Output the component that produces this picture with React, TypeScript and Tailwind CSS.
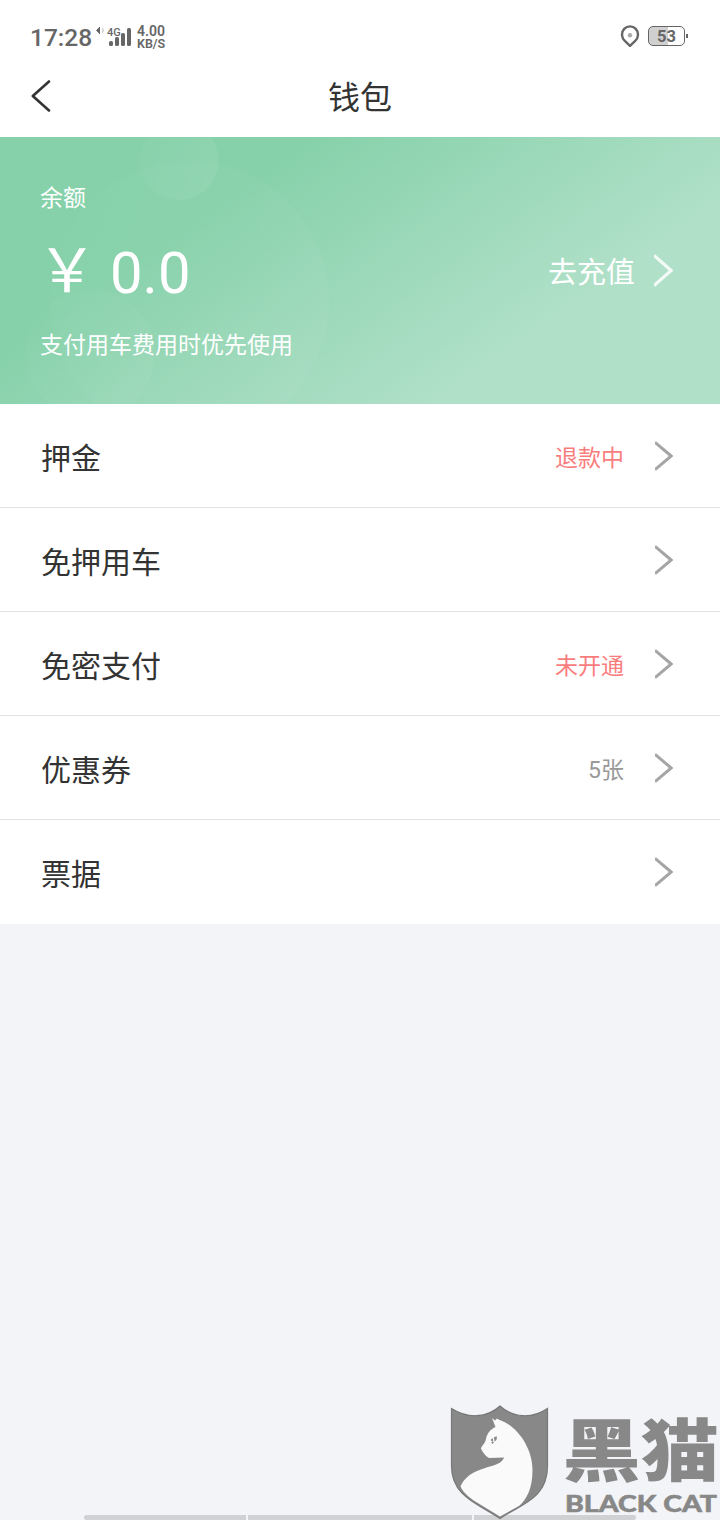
import { ReactNode } from 'react';

interface WalletItem {
  title: string;
  value?: string;
  valueClass?: string;
}

const items: WalletItem[] = [
  { title: '押金', value: '退款中', valueClass: 'text-[#fa7d7d]' },
  { title: '免押用车' },
  { title: '免密支付', value: '未开通', valueClass: 'text-[#fa7d7d]' },
  { title: '优惠券', value: '5张', valueClass: 'text-[#999999]' },
  { title: '票据' },
];

function StatusBar() {
  return (
    <div className="flex h-[60px] items-center justify-between pt-3 pl-[30px] pr-8 text-[#666666]">
      <div className="flex items-center pt-0.5">
        <span className="mt-0.5 w-[62px] text-[24.5px] leading-7 font-medium whitespace-nowrap">17:28</span>
        <svg className="ml-1 h-[22px] w-[36px]" viewBox="96 26 36 22">
          <path d="M99.5 27v7M96.5 30.5l3-3.2v6z" fill="#666" stroke="#666" strokeWidth="1" />
          <path d="M102 27v7l2.3-3.5z" fill="#d5d5d5" />
          <text x="107" y="35.5" fontSize="11" fontWeight="500" fill="#666">4G</text>
          <g fill="#666">
            <rect x="109" y="41" width="4" height="5" rx="1.6" />
            <rect x="115" y="37" width="4" height="9" rx="1.6" />
            <rect x="121" y="33" width="4" height="13" rx="1.6" />
            <rect x="127" y="28" width="4" height="18" rx="1.6" />
          </g>
        </svg>
        <div className="ml-[5px] flex flex-col font-semibold">
          <span className="text-[14px] leading-[13px]">4.00</span>
          <span className="text-[12.5px] leading-[12px]">KB/S</span>
        </div>
      </div>

      <div className="flex items-center">
        <svg className="h-[22px] w-[20px]" viewBox="620 25 20 22">
          <path
            d="M630 45.8l-5.2-5a8 8.2 0 1 1 10.4 0z"
            fill="none"
            stroke="#666"
            strokeWidth="2.4"
            strokeLinejoin="round"
          />
          <circle cx="630" cy="35.3" r="2.2" fill="#aaa" />
        </svg>
        <div className="ml-2 flex h-5 w-[37px] items-center justify-center rounded-[5px] border border-[#666666] bg-[linear-gradient(90deg,#d0d0d0_53%,#ffffff_53%)] p-px pt-[3px] text-[16.5px] leading-none font-bold">
          53
        </div>
        <div className="ml-px h-1 w-[2px] bg-[#666666]" />
      </div>
    </div>
  );
}

function Header() {
  return (
    <header className="flex h-[77px] items-center justify-between px-[30px] pb-1">
      <svg className="h-[34px] w-[22px]" viewBox="30 79.5 22 34">
        <path d="M49 81L32.8 95.5L49 110" fill="none" stroke="#333" strokeWidth="2.6" strokeLinecap="round" strokeLinejoin="round" />
      </svg>
      <h1 className="mt-0.5 text-[32px] leading-10 text-[#333333]">钱包</h1>
      <div className="w-[22px]" />
    </header>
  );
}

function Chevron({ className }: { className: string }) {
  return (
    <svg className={className} viewBox="0 0 18 30" preserveAspectRatio="none">
      <path d="M0 1.3L16.2 15L0 28.7" fill="none" stroke="currentColor" strokeWidth="3" />
    </svg>
  );
}

function BalanceBackground() {
  return (
    <svg className="absolute inset-0 h-[267px] w-[720px]" viewBox="0 0 720 267">
      <defs>
        <linearGradient id="bubble" x1="0" y1="0.3" x2="1" y2="0.7">
          <stop offset="0" stopColor="#fff" stopOpacity="0.02" />
          <stop offset="1" stopColor="#fff" stopOpacity="0.07" />
        </linearGradient>
        <linearGradient id="bubbleSoft" x1="0" y1="0.3" x2="1" y2="0.7">
          <stop offset="0" stopColor="#fff" stopOpacity="0.015" />
          <stop offset="1" stopColor="#fff" stopOpacity="0.04" />
        </linearGradient>
      </defs>
      <circle cx="179" cy="23.5" r="39.5" fill="url(#bubble)" />
      <circle cx="189.5" cy="164" r="139.5" fill="url(#bubbleSoft)" />
      <circle cx="90" cy="217" r="64.5" fill="url(#bubbleSoft)" />
    </svg>
  );
}

function BalanceCard({ children }: { children: ReactNode }) {
  return (
    <section className="relative h-[267px] overflow-hidden bg-[linear-gradient(145deg,#86d1aa_28%,#b0e0c8_74%)] text-white">
      <BalanceBackground />
      <div className="relative flex h-full items-center justify-between pl-10 pr-[47px]">{children}</div>
    </section>
  );
}

function ItemRow({ item }: { item: WalletItem }) {
  return (
    <li className="flex h-[104px] items-center border-b border-[#e2e2e2] bg-white pl-[41px] pr-[47px] last:border-b-0">
      <span className="mt-1.5 flex-1 text-[30px] leading-10 text-[#333333]">{item.title}</span>
      {item.value && <span className={`mt-1.5 text-[23px] leading-8 ${item.valueClass}`}>{item.value}</span>}
      <Chevron className="ml-[31px] h-[30px] w-[18px] text-[#a5a5a5]" />
    </li>
  );
}

function HomeIndicator() {
  return (
    <div className="absolute bottom-0 left-[84px] flex h-[5px] w-[552px] gap-[2px] overflow-hidden rounded-full">
      <div className="w-[162px] bg-[#d0d1d3]" />
      <div className="flex-1 bg-[#d0d1d3]" />
      <div className="w-[162px] bg-[#d0d1d3]" />
    </div>
  );
}

function BlackCatLogo() {
  return (
    <svg className="absolute right-0 bottom-0 h-[120px] w-[270px]" viewBox="450 1400 270 120">
      <path
        d="M451.5 1408.5C468 1419 487 1418 500 1406C513 1418 532 1419 547.5 1408.5V1466C547.5 1499 521 1504 500 1518.5C479 1504 451.5 1497 451.5 1466Z"
        fill="#888"
        stroke="#777"
        strokeWidth="1.2"
      />
      <path
        d="M492 1418L495 1420.5L497 1418.5L499.5 1420C516 1425 532.5 1447 532.5 1470C532.5 1488 527 1499 519 1506L500 1516.5L477 1502.5C468 1497 462 1491 460.5 1486C467 1473 479 1470 488 1467C496 1465 502 1463 504 1457.5L489 1458C485 1456 481.5 1450 481 1448.5C482 1445 485 1444 486 1439C487 1433 491 1429 495.5 1427Z"
        fill="#fafafa"
      />
      <path d="M490.5 1440l2.5-2v4zM494 1437l3-.5-.5 3.5-2 1.5zM491 1442.5l3.5-1-2 2.5z" fill="#888" />
      <g fill="#888">
        <text
          transform="translate(562.5 1475.5) scale(1.03 .89)"
          fontSize="76"
          fontWeight="900"
          className="font-['Noto_Sans_CJK_SC',sans-serif]"
        >
          黑猫
        </text>
        <text
          x="565"
          y="1512"
          fontSize="22"
          fontWeight="900"
          className="font-[Lato,sans-serif]"
          textLength="152"
          lengthAdjust="spacingAndGlyphs"
          stroke="#888"
          strokeWidth=".5"
        >
          BLACK CAT
        </text>
      </g>
    </svg>
  );
}

export default function App() {
  return (
    <div className="relative h-[1520px] w-[720px] overflow-hidden bg-[#f3f4f7] font-[Roboto,'Noto_Sans_CJK_SC',sans-serif]">
      <div className="bg-white">
        <StatusBar />
        <Header />
      </div>

      <BalanceCard>
        <div className="flex flex-col pt-[3px]">
          <span className="text-[23px] leading-8">余额</span>
          <span className="mt-[22px] flex items-center text-[58px] leading-[72px]">
            <span className="-ml-[3px] w-[73px] pb-[14px] font-['Noto_Sans_CJK_SC',sans-serif] text-[60px] leading-[58px]">￥</span>
            0.0
          </span>
          <span className="mt-[21px] text-[23px] leading-8">支付用车费用时优先使用</span>
        </div>
        <div className="flex items-center">
          <span className="mt-1 text-[29px] leading-10">去充值</span>
          <Chevron className="ml-[19px] h-[33px] w-[19px] text-white/85" />
        </div>
      </BalanceCard>

      <ul>
        {items.map((item) => (
          <ItemRow key={item.title} item={item} />
        ))}
      </ul>

      <HomeIndicator />
      <BlackCatLogo />
    </div>
  );
}
